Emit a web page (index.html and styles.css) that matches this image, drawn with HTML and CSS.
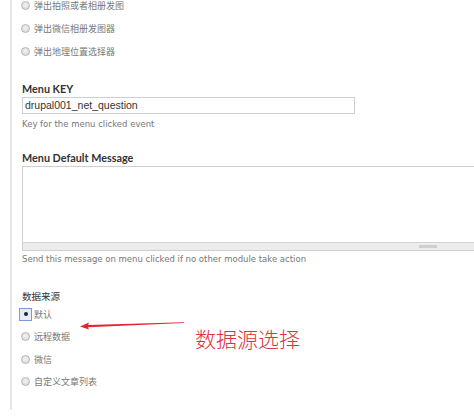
FILE: index.html
```html
<!DOCTYPE html>
<html>
<head>
<meta charset="utf-8">
<link rel="stylesheet" href="styles.css">
</head>
<body>
<div class="page">
  <div class="options top">
    <div class="opt"><span class="radio"></span><span class="cn">弹出拍照或者相册发图</span></div>
    <div class="opt"><span class="radio"></span><span class="cn">弹出微信相册发图器</span></div>
    <div class="opt"><span class="radio"></span><span class="cn">弹出地理位置选择器</span></div>
  </div>

  <div class="field key">
    <div class="label">Menu KEY</div>
    <div class="input">drupal001_net_question</div>
    <div class="desc">Key for the menu clicked event</div>
  </div>

  <div class="field msg">
    <div class="label">Menu Default Message</div>
    <div class="textarea">
      <div class="area"></div>
      <div class="grip"><span class="handle"></span></div>
    </div>
    <div class="desc">Send this message on menu clicked if no other module take action</div>
  </div>

  <div class="field src">
    <div class="label cn-label">数据来源</div>
    <div class="options bottom">
      <div class="opt"><span class="radio checked"></span><span class="cn">默认</span></div>
      <div class="opt"><span class="radio"></span><span class="cn">远程数据</span></div>
      <div class="opt"><span class="radio"></span><span class="cn">微信</span></div>
      <div class="opt"><span class="radio"></span><span class="cn">自定义文章列表</span></div>
    </div>
  </div>

  <svg class="arrow" width="110" height="12" viewBox="0 0 110 12">
    <polygon points="0,7.5 9,3.5 8,6 104,3.2 104,4 8,8.2 9,10.5" fill="#e4252f"/>
  </svg>
  <div class="annot">数据源选择</div>
</div>
</body>
</html>
```

FILE: styles.css
```css
html, body {
  margin: 0;
  padding: 0;
  background: #fff;
  overflow: hidden;
}
body {
  width: 474px;
  height: 416px;
  position: relative;
}
.page {
  margin-left: 10px;
  border-left: 2px solid #e6e6e6;
  padding-left: 10px;
  height: 416px;
  box-sizing: border-box;
  font-family: "DejaVu Sans", "Noto Sans CJK SC", sans-serif;
}
.options.top {
  margin-top: -6px;
}
.opt {
  display: flex;
  align-items: center;
  height: 23px;
}
.options.bottom .opt {
  height: 22.5px;
}
.radio {
  width: 7px;
  height: 7px;
  border-radius: 50%;
  border: 1px solid #b5b5b5;
  background: radial-gradient(circle at 50% 40%, #f2f2f2, #d6d6d6);
  margin-left: -1px;
  margin-right: 4px;
  flex: none;
  position: relative;
}
.radio.checked {
  background: #fff;
  border-color: #999;
}
.radio.checked::before {
  content: "";
  position: absolute;
  left: -3px;
  top: -3px;
  width: 11px;
  height: 11px;
  border: 1px solid #7c9ad8;
  background: #e4ecfa;
  z-index: -1;
}
.radio.checked::after {
  content: "";
  position: absolute;
  left: 1.5px;
  top: 1.5px;
  width: 4px;
  height: 4px;
  border-radius: 50%;
  background: #222;
}
.options.bottom .opt:first-child .radio {
  z-index: 0;
}
.cn {
  font-family: "Noto Sans CJK SC", sans-serif;
  font-size: 9px;
  color: #777;
}
.field.key {
  margin-top: 19px;
}
.label {
  font-family: Lato, "Liberation Sans", sans-serif;
  font-size: 10.8px;
  font-weight: bold;
  color: #333;
  line-height: 14px;
}
.input {
  margin-top: 1px;
  width: 333px;
  height: 17px;
  box-sizing: border-box;
  border: 1px solid #cfcfcf;
  font-family: "Liberation Sans", Arial, sans-serif;
  font-size: 10.5px;
  line-height: 15px;
  padding-left: 2px;
  color: #333;
}
.desc {
  margin-top: 4px;
  font-size: 8.5px;
  line-height: 12px;
  color: #777;
}
.field.msg {
  margin-top: 21px;
}
.textarea {
  margin-top: 1px;
  width: 470px;
  height: 85px;
  border: 1px solid #cfcfcf;
  box-sizing: border-box;
  display: flex;
  flex-direction: column;
}
.area {
  flex: 1;
  background: #fff;
}
.grip {
  height: 7px;
  background: #ececec;
  border-top: 1px solid #d4d4d4;
  position: relative;
}
.handle {
  position: absolute;
  left: 396px;
  top: 2px;
  width: 18px;
  height: 3px;
  background: #cfcfcf;
}
.field.msg .desc {
  margin-top: 2px;
}
.field.src {
  margin-top: 24px;
}
.cn-label {
  font-family: "Noto Sans CJK SC", sans-serif;
  font-weight: normal;
  font-size: 9.5px;
  color: #333;
}
.arrow {
  position: absolute;
  left: 80px;
  top: 319px;
}
.annot {
  position: absolute;
  left: 195px;
  top: 324px;
  font-family: "Noto Sans CJK SC", sans-serif;
  font-size: 21px;
  line-height: 28px;
  color: #e2303c;
  font-weight: 300;
}
```
